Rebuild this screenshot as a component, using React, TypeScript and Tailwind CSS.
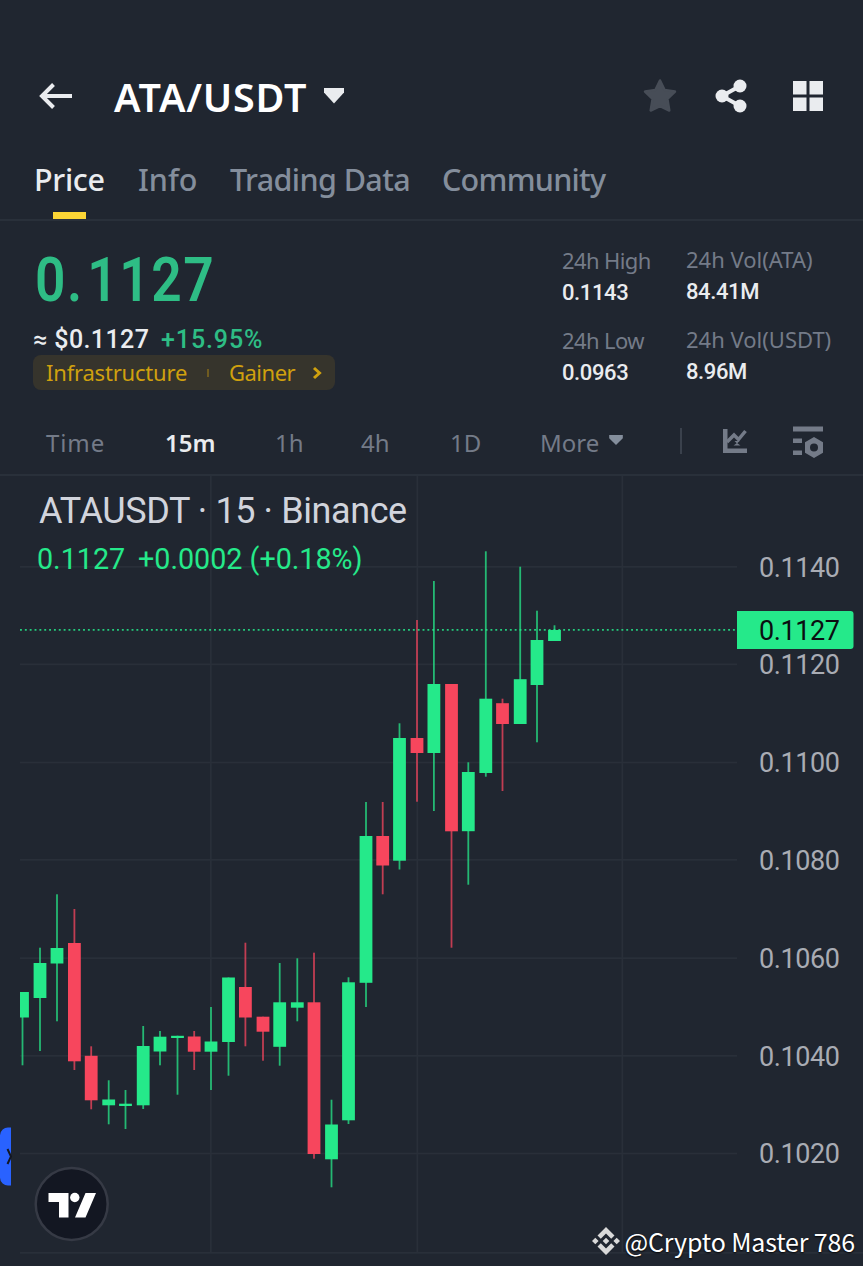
import React from "react";
import clsx from "clsx";

const UP = "#25e98a";
const DOWN = "#f7465d";

// x centre, high, body top, body bottom, low, direction
type Candle = [number, number, number, number, number, 1 | 0];

const candles: Candle[] = [
  [22.5, 992, 992, 1017.5, 1065.3, 1],
  [40, 947.7, 963, 998, 1051, 1],
  [57, 894.3, 948, 963.5, 1021.3, 1],
  [74.4, 909, 943, 1061.3, 1070, 0],
  [91.2, 1046.3, 1055.8, 1100.3, 1109.3, 0],
  [108.7, 1080.3, 1099.5, 1105.3, 1124.3, 1],
  [125.5, 1090, 1103.7, 1106, 1129, 1],
  [143.2, 1026, 1046, 1105.3, 1109, 1],
  [160, 1031, 1036.7, 1051.5, 1065.3, 1],
  [177.5, 1035.7, 1035.8, 1038, 1094.7, 1],
  [194.2, 1031, 1036.5, 1051.7, 1070, 0],
  [211, 1007, 1041.5, 1051.7, 1090, 1],
  [228.5, 977.5, 977.5, 1042, 1075.7, 1],
  [245.4, 942.7, 987, 1017.5, 1046.3, 0],
  [263, 1016.7, 1016.7, 1031.7, 1060.7, 0],
  [279.7, 963, 1002.3, 1046.8, 1065.7, 1],
  [297.3, 958.3, 1002.3, 1007.7, 1021.3, 1],
  [314, 952.7, 1002.3, 1154, 1158.7, 0],
  [331.5, 1099.7, 1124.5, 1159.3, 1187.3, 1],
  [348.5, 977.3, 982.3, 1120.3, 1124, 1],
  [366, 802, 836, 982.8, 1007, 1],
  [382.7, 802, 836, 865.5, 894.3, 0],
  [399.5, 723.3, 738, 860.7, 869.5, 1],
  [417, 620, 738, 753, 801.7, 0],
  [433.9, 581, 684, 753, 811, 1],
  [451.5, 684, 684, 831.3, 947.7, 0],
  [468.3, 762.3, 772, 831.2, 884.7, 1],
  [485.8, 551.3, 698.7, 773, 776.7, 1],
  [502.5, 698.7, 703.2, 724, 791, 0],
  [520.2, 566.7, 679.2, 724, 724, 1],
  [537, 610.7, 640, 685, 742.3, 1],
  [554.5, 625.3, 630, 641, 641, 1],
];

const levels = [
  { price: "0.1140", y: 567 },
  { price: "0.1120", y: 664.5 },
  { price: "0.1100", y: 762.7 },
  { price: "0.1080", y: 860 },
  { price: "0.1060", y: 958.3 },
  { price: "0.1040", y: 1056 },
  { price: "0.1020", y: 1153.7 },
];

export default function App() {
  return (
    <div className="w-[863px] h-[1266px] overflow-hidden bg-[#202630] text-[#eaecef] font-['Noto_Sans',sans-serif] flex flex-col whitespace-nowrap">
      <Header />
      <Tabs />
      <Summary />
      <Intervals />
      <Chart />
    </div>
  );
}

function Header() {
  return (
    <header className="h-[146px] shrink-0 pt-[66px] pl-[38px] pr-[40px] flex items-start">
      <div className="h-[60px] flex items-center w-full">
        <svg className="w-[36px] h-[32px]" viewBox="0 0 36 32" fill="none" stroke="#eaecef" strokeWidth="4">
          <path d="M34 16H4M15.500 4.500L4 16l11.500 11.500" />
        </svg>
        <h1 className="ml-[40px] pt-[3px] w-[194px] text-[39.500px] font-semibold leading-none tracking-[0.750px] text-white">ATA/USDT</h1>
        <svg className="ml-[15px] w-[22px] h-[18px]" viewBox="0 0 22 18" fill="#eaecef">
          <path d="M1 1h20v4.500L11 16.500 1 5.500z" />
        </svg>
        <svg className="ml-auto w-[34px] h-[36px]" viewBox="0 0 34 36">
          <path
            d="M17 2.500l4.600 9.500 10.400 1.500-7.600 7.400 1.900 11.600L17 28 7.700 32.500l1.900-11.600L2 13.500l10.400-1.500z"
            fill="#474d57"
            stroke="#474d57"
            strokeWidth="2.500"
            strokeLinejoin="round"
          />
        </svg>
        <svg className="ml-[37px] w-[34px] h-[36px]" viewBox="0 0 34 36" fill="#eaecef">
          <path d="M26 8L8 18l18 10" fill="none" stroke="#eaecef" strokeWidth="4" />
          <circle cx="26" cy="8" r="6.500" />
          <circle cx="8" cy="18" r="6.500" />
          <circle cx="26" cy="28" r="6.500" />
        </svg>
        <svg className="ml-[45px] w-[30px] h-[30px]" viewBox="0 0 30 30" fill="#eaecef">
          <path d="M0 0h13.500v13.500H0zM16.500 0H30v13.500H16.500zM0 16.500h13.500V30H0zM16.500 16.500H30V30H16.500z" />
        </svg>
      </div>
    </header>
  );
}

function Tabs() {
  return (
    <nav className="h-[75px] shrink-0 border-b-2 border-[#29303a] pl-[34px] flex text-[30.500px] font-medium text-[#848e9c]">
      <div className="w-[104px] flex flex-col">
        <span className="h-[66px] leading-[66px] tracking-[-0.300px] text-[#eaecef]">Price</span>
        <span className="ml-[19px] w-[33px] h-[7px] bg-[#fcd535]" />
      </div>
      <span className="w-[92px] leading-[66px]">Info</span>
      <span className="w-[212px] leading-[66px] tracking-[-0.600px]">Trading Data</span>
      <span className="leading-[66px] tracking-[-0.750px]">Community</span>
    </nav>
  );
}

function Stat({ label, value, tight }: { label: string; value: string; tight?: boolean }) {
  return (
    <div className="flex flex-col h-[80px]">
      <span className={clsx("h-[32px] leading-[31px] text-[22px] text-[#747b88]", tight && "tracking-[-0.600px]")}>{label}</span>
      <span className="h-[31px] leading-[31px] text-[22px] font-medium font-['Roboto',sans-serif] tracking-[-0.400px]">{value}</span>
    </div>
  );
}

function Summary() {
  return (
    <section className="h-[189px] shrink-0 pl-[33px] flex">
      <div className="w-[529px] flex flex-col">
        <div className="h-[102px] pt-[22px] pl-[2px] text-[62px] leading-[74px] font-semibold font-['Roboto',sans-serif] text-[#2ebd85]">
          <span className="inline-block origin-left scale-x-[0.860] tracking-[1.800px]">
            0<span className="tracking-[6px]">.</span>1127
          </span>
        </div>
        <div className="h-[34px] -mb-[2px] flex items-center text-[25px] font-medium font-['Roboto',sans-serif]">
          <span className="w-[128px] tracking-[0.400px]">≈ $0.1127</span>
          <span className="tracking-[0.900px] text-[#2ebd85]">+15.95%</span>
        </div>
        <div className="w-[302px] h-[35px] rounded-[8px] bg-[#36342c] text-[#d0a10e] text-[22px] flex items-center pl-[13px]">
          <span className="w-[161px] -mt-[1px] tracking-[-0.200px]">Infrastructure</span>
          <span className="w-[2px] h-[8px] bg-[#6f5b20]" />
          <span className="ml-[20px] w-[68px] -mt-[1px] tracking-[-0.500px]">Gainer</span>
          <svg className="ml-[14px] w-[12px] h-[14px]" viewBox="0 0 12 14" fill="none" stroke="#d0a10e" strokeWidth="3">
            <path d="M3 2l5.500 5L3 12" />
          </svg>
        </div>
      </div>
      <div className="w-[124px] pt-[24px]">
        <Stat label="24h High" value="0.1143" tight />
        <Stat label="24h Low" value="0.0963" tight />
      </div>
      <div className="pt-[23px]">
        <Stat label="24h Vol(ATA)" value="84.41M" />
        <Stat label="24h Vol(USDT)" value="8.96M" />
      </div>
    </section>
  );
}

function Intervals() {
  const items = [
    { label: "Time", width: "w-[119px] tracking-[0.900px]" },
    { label: "15m", width: "w-[110px]", active: true },
    { label: "1h", width: "w-[86px]" },
    { label: "4h", width: "w-[89px]" },
    { label: "1D", width: "w-[90px]" },
  ];
  return (
    <div className="h-[66px] shrink-0 border-b-2 border-[#29303a] pl-[46px] flex items-center text-[24px] text-[#747b88]">
      {items.map((item) => (
        <span key={item.label} className={clsx("pt-[2px]", item.width, item.active && "font-semibold text-[#eaecef]")}>
          {item.label}
        </span>
      ))}
      <span className="w-[69px] pt-[2px]">More</span>
      <svg className="w-[14px] h-[10px] -mt-[5px]" viewBox="0 0 15 11" fill="#848e9c">
        <path d="M0 0h15v3.500L7.500 11 0 3.500z" />
      </svg>
      <span className="ml-[57px] w-[2px] h-[26px] -mt-[2px] bg-[#3a414c]" />
      <svg className="ml-[41px] w-[24px] h-[26px] -mt-[2px]" viewBox="0 0 24 26" fill="none" stroke="#747b88">
        <path d="M2.250 1v21.750H24" strokeWidth="4.500" />
        <path d="M4 14l7-7 4.500 4.500L22.500 3" strokeWidth="3.500" />
        <path d="M10.500 17.500l3.500-2.500 3.500 2.500zM11.500 13h5L14 15.500z" fill="#747b88" stroke="none" />
      </svg>
      <svg className="ml-[46px] w-[30px] h-[32px] -mt-[1px]" viewBox="0 0 30 32" fill="#747b88">
        <path d="M0 .5h30v5H0zM0 12.500h9v4.500H0zM0 24.500h9V29H0z" />
        <path fillRule="evenodd" d="M21 11l9 5.300v10.400L21 32l-9-5.300V16.300zM21 17.500a4 4 0 1 0 0 8 4 4 0 0 0 0-8z" />
      </svg>
    </div>
  );
}

function Chart() {
  return (
    <section className="relative h-[790px] font-['Roboto',sans-serif]">
      <svg className="block w-[863px] h-[790px]" viewBox="0 476 863 790">
        <defs>
          <clipPath id="plot">
            <rect x="20" y="476" width="717" height="777" />
          </clipPath>
        </defs>
        <g fill="#292f39">
          {[210, 416.5, 621.5].map((x) => (
            <rect key={x} x={x} y="476" width="1.700" height="777" />
          ))}
          {levels.map((l) => (
            <rect key={l.price} x="20" y={l.y - 1} width="717" height="1.700" />
          ))}
          <rect x="20" y="1252" width="843" height="1.700" />
        </g>
        <g clipPath="url(#plot)">
          {candles.map(([x, high, top, bottom, low, up]) => (
            <g key={x} fill={up ? UP : DOWN}>
              <rect x={x - 0.9} y={high} width="1.800" height={low - high} opacity="0.750" />
              <rect x={x - 6.4} y={top} width="12.800" height={bottom - top} />
            </g>
          ))}
        </g>
        <path d="M20 629.900H737" stroke={UP} strokeWidth="1.600" strokeDasharray="1.900 2.950" opacity="0.850" />
        <g fontSize="27" fill="#a9acb4">
          {levels.map((l) => (
            <text key={l.price} x="759" y={Math.floor(l.y + 10.1)} textLength="81">
              {l.price}
            </text>
          ))}
        </g>
        <path d="M737 611h113.500a3 3 0 0 1 3 3v32a3 3 0 0 1-3 3H737z" fill={UP} />
        <text x="759" y="639.500" fontSize="27" textLength="81" fill="#0b0e11">
          0.1127
        </text>
        <g>
          <path d="M11 1127.500H9a8 8 0 0 0-9 8v42a8 8 0 0 0 9 8h2z" fill="#2962ff" />
          <path d="M7.500 1149l3.500 7.500-3.500 7.500" fill="none" stroke="#131722" strokeWidth="2" />
        </g>
        <circle cx="71.700" cy="1204" r="36" fill="#131722" stroke="#363a45" strokeWidth="2.500" />
        <g fill="#fff">
          <path d="M48.500 1193H68.500v24.500h-9.500v-15.500H48.500zM85.500 1193h10.500L85.500 1217.500H75z" />
          <circle cx="74.800" cy="1197.500" r="4.700" />
        </g>
      </svg>

      <div className="absolute left-[39px] top-[13px] text-[36px] leading-[44px] tracking-[-0.400px] text-[#d1d4dc]">ATAUSDT · 15 · Binance</div>
      <div className="absolute left-[37px] top-[65px] text-[28.700px] leading-[36px] text-[#25e98a]">
        <span className="inline-block w-[101px]">0.1127</span>+0.0002 (+0.18%)
      </div>

      <div className="absolute right-[8px] bottom-[7px] h-[36px] flex items-center gap-[4px] text-white [text-shadow:0_1px_2px_#000]">
        <svg className="w-[28px] h-[28px]" viewBox="0 0 28 28" fill="#d9d9d9">
          <path d="M14 0l8.500 8.500-3.300 3.300L14 6.600l-5.200 5.200-3.300-3.300zM14 28l-8.500-8.500 3.300-3.300 5.200 5.200 5.200-5.200 3.300 3.300zM3.300 10.700L6.600 14l-3.300 3.300L0 14zM24.700 10.700L28 14l-3.300 3.300-3.300-3.300zM14 10.700l3.300 3.300-3.300 3.300-3.300-3.300z" />
        </svg>
        <span className="text-[25px] leading-[34px] tracking-[-0.150px] font-['Noto_Sans_CJK_SC',sans-serif]">@Crypto Master 786</span>
      </div>
    </section>
  );
}
